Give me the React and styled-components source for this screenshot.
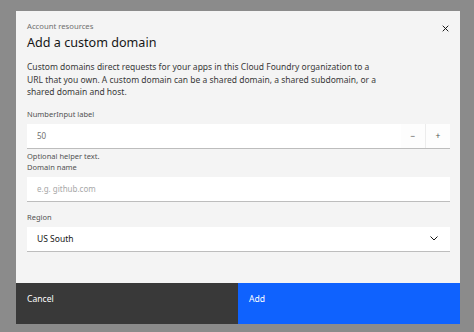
import React from "react";
import styled, { createGlobalStyle } from "styled-components";

const GlobalStyle = createGlobalStyle`
  html, body {
    margin: 0;
    padding: 0;
    background: #8b8b8b;
  }
  body {
    font-family: "Noto Sans", "Open Sans", sans-serif;
    -webkit-font-smoothing: antialiased;
  }
`;

const Overlay = styled.div`
  width: 474px;
  height: 332px;
  box-sizing: border-box;
  padding: 11px 14px 8px 16px;
  display: flex;
`;

const Modal = styled.div`
  flex: 1;
  display: flex;
  flex-direction: column;
  background: #f4f4f4;
`;

const Header = styled.div`
  position: relative;
  padding: 9px 11px 0 11px;
`;

const Eyebrow = styled.div`
  font-size: 7.7px;
  line-height: 12px;
  color: #6f6f6f;
`;

const Title = styled.h2`
  margin: 1px 0 0;
  font-size: 12.6px;
  line-height: 20px;
  font-weight: 400;
  color: #161616;
`;

const Close = styled.button`
  position: absolute;
  top: 9px;
  right: 7px;
  width: 16px;
  height: 16px;
  padding: 0;
  border: 0;
  background: none;
  display: flex;
  align-items: center;
  justify-content: center;
`;

const Body = styled.div`
  flex: 1;
  padding: 8px 10px 0 11px;
`;

const Paragraph = styled.p`
  margin: 0 0 10px;
  font-size: 8.5px;
  line-height: 12.5px;
  color: #393939;
`;

const Label = styled.div`
  font-size: 7.5px;
  line-height: 11px;
  color: #525252;
  margin-bottom: 4px;
`;

const Helper = styled.div`
  font-size: 7.5px;
  line-height: 11px;
  color: #525252;
  margin-top: 2px;
`;

const Field = styled.div`
  display: flex;
  align-items: center;
  height: 24px;
  background: #fff;
  border-bottom: 1px solid #bdbdbd;
`;

const Value = styled.div`
  flex: 1;
  padding-left: 10px;
  font-size: ${(p) => (p.$big ? "8.5px" : "8px")};
  color: ${(p) => (p.$placeholder ? "#a8a8a8" : p.$big ? "#161616" : "#6f6f6f")};
`;

const Steppers = styled.div`
  display: flex;
  height: 100%;
`;

const Step = styled.div`
  width: 24px;
  height: 100%;
  display: flex;
  align-items: center;
  justify-content: center;
  background: #fdfdfd;
  color: #525252;
  font-size: 8.5px;
  border-left: ${(p) => (p.$divider ? "1px solid #ececec" : "none")};
`;

const Chevron = styled.div`
  width: 24px;
  display: flex;
  justify-content: center;
  margin-right: 4px;
`;

const Group = styled.div`
  margin-bottom: 10px;
`;

const Footer = styled.div`
  display: grid;
  grid-template-columns: 1fr 1fr;
  height: 41px;
`;

const FooterButton = styled.div`
  box-sizing: border-box;
  padding: 10px 11px 0;
  font-size: 8.6px;
  line-height: 12px;
  color: #fff;
  background: ${(p) => (p.$primary ? "#0f62fe" : "#393939")};
`;

export default function App() {
  return (
    <>
      <GlobalStyle />
      <Overlay>
        <Modal>
          <Header>
            <Eyebrow>Account resources</Eyebrow>
            <Title>Add a custom domain</Title>
            <Close aria-label="Close">
              <svg width="7" height="7" viewBox="0 0 10 10">
                <path d="M1 1L9 9M9 1L1 9" stroke="#161616" strokeWidth="1.4" />
              </svg>
            </Close>
          </Header>
          <Body>
            <Paragraph>
              Custom domains direct requests for your apps in this Cloud Foundry organization to a
              <br />
              URL that you own. A custom domain can be a shared domain, a shared subdomain, or a
              <br />
              shared domain and host.
            </Paragraph>
            <Label>NumberInput label</Label>
            <Field>
              <Value>50</Value>
              <Steppers>
                <Step>−</Step>
                <Step $divider>+</Step>
              </Steppers>
            </Field>
            <Helper>Optional helper text.</Helper>
            <Group>
              <Label>Domain name</Label>
              <Field>
                <Value $placeholder>e.g. github.com</Value>
              </Field>
            </Group>
            <Label>Region</Label>
            <Field>
              <Value $big>US South</Value>
              <Chevron>
                <svg width="8" height="5" viewBox="0 0 8 5">
                  <path d="M0.5 0.5L4 4L7.5 0.5" fill="none" stroke="#161616" strokeWidth="1" />
                </svg>
              </Chevron>
            </Field>
          </Body>
          <Footer>
            <FooterButton>Cancel</FooterButton>
            <FooterButton $primary>Add</FooterButton>
          </Footer>
        </Modal>
      </Overlay>
    </>
  );
}
